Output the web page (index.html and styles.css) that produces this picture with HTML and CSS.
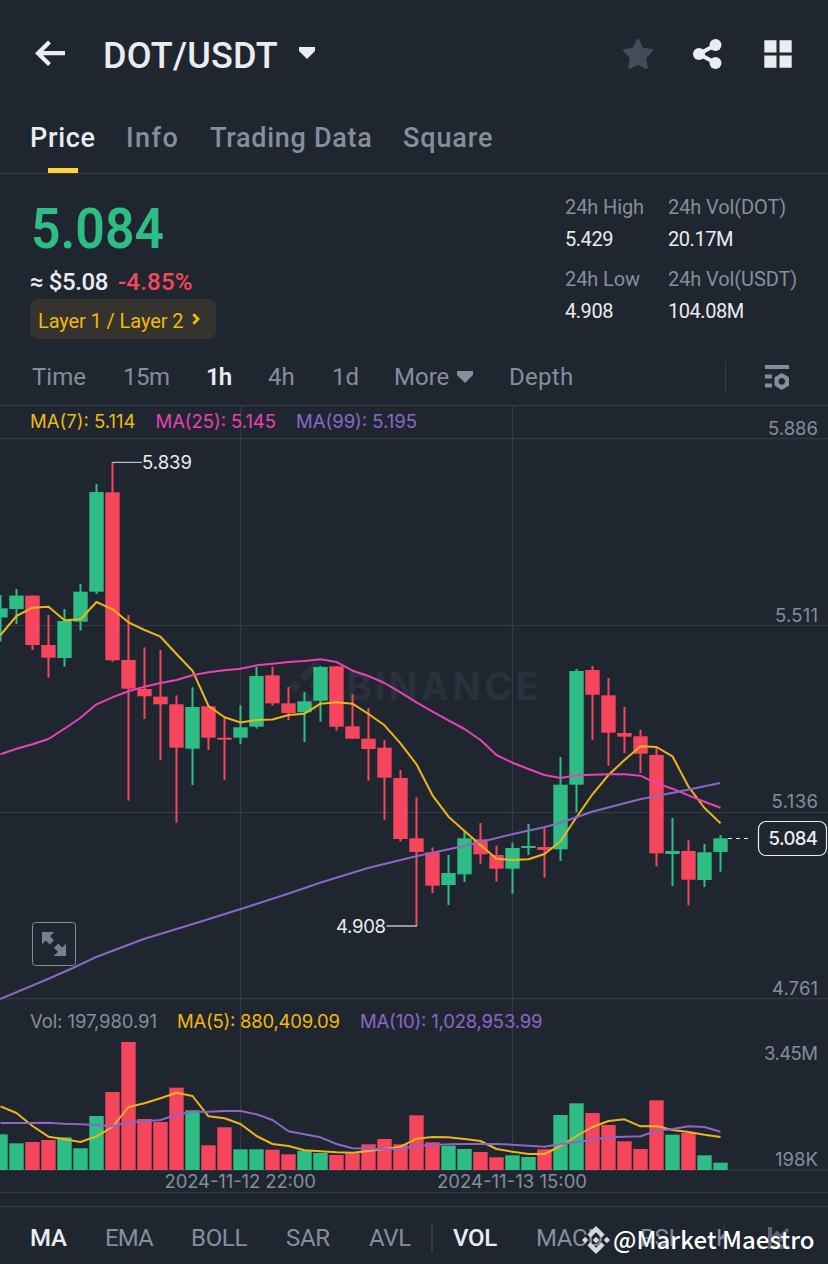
FILE: index.html
```html
<!DOCTYPE html>
<html lang="en">
<head>
<meta charset="utf-8">
<title>DOT/USDT</title>
<link rel="stylesheet" href="styles.css">
</head>
<body>
<div class="app">
  <header class="topbar">
    <svg class="back" width="32" height="26" viewBox="0 0 32 26"><path d="M15.500 2 4 13.200 15.500 24.400M4 13.200H31" fill="none" stroke="currentColor" stroke-width="4.200"/></svg>
    <h1 class="pair">DOT/USDT</h1>
    <svg class="caret" width="16" height="12" viewBox="0 0 16 12"><path d="M0 0h16v4L8 12 0 4z" fill="currentColor"/></svg>
    <svg class="star" width="30" height="30" viewBox="0 0 30 30"><path d="M15 1.500 19 10.200 28.500 11.500 21.700 18.500 23.300 28.400 15 24.200 6.700 28.400 8.300 18.500 1.500 11.500 11 10.200z" fill="currentColor" stroke="currentColor" stroke-width="3" stroke-linejoin="round"/></svg>
    <svg class="share" width="30" height="30" viewBox="0 0 30 30"><path d="M22.500 6 6 15l16.500 9" fill="none" stroke="currentColor" stroke-width="4"/><circle cx="6" cy="15" r="6" fill="currentColor"/><circle cx="22.500" cy="6" r="6" fill="currentColor"/><circle cx="22.500" cy="24" r="6" fill="currentColor"/></svg>
    <svg class="grid" width="28" height="28" viewBox="0 0 28 28"><path d="M.3 .3h12.200v12.200H.3zM15.500 .3h12.200v12.200H15.500zM.3 15.500h12.200v12.200H.3zM15.500 15.500h12.200v12.200H15.500z" fill="currentColor"/></svg>
  </header>

  <nav class="tabs">
    <a class="tab tab-price active">Price</a>
    <a class="tab tab-info">Info</a>
    <a class="tab tab-data">Trading Data</a>
    <a class="tab tab-square">Square</a>
  </nav>

  <section class="summary">
    <div class="quote">
      <div class="last">5.084</div>
      <div class="fiat"><span class="usd">≈ $5.08</span><span class="change">-4.85%</span></div>
      <a class="tag"><span>Layer 1 / Layer 2</span><svg width="8" height="12" viewBox="0 0 8 12"><path d="M1.300 1.200 6 6 1.300 10.800" fill="none" stroke="currentColor" stroke-width="2.800"/></svg></a>
    </div>
    <dl class="stats">
      <div><dt>24h High</dt><dd>5.429</dd></div>
      <div><dt>24h Vol(DOT)</dt><dd>20.17M</dd></div>
      <div><dt>24h Low</dt><dd>4.908</dd></div>
      <div><dt>24h Vol(USDT)</dt><dd>104.08M</dd></div>
    </dl>
  </section>

  <nav class="ranges">
    <a class="r-time">Time</a>
    <a class="r-15m">15m</a>
    <a class="r-1h active">1h</a>
    <a class="r-4h">4h</a>
    <a class="r-1d">1d</a>
    <a class="r-more">More<svg width="16" height="12" viewBox="0 0 16 12"><path d="M0 0h16v4L8 12 0 4z" fill="currentColor"/></svg></a>
    <a class="r-depth">Depth</a>
    <span class="settings"><svg width="25" height="26" viewBox="0 0 25 26"><path d="M0 0h24v4H0zM0 9.500h7v4H0zM0 18.500h7v4H0z" fill="currentColor"/><path fill-rule="evenodd" d="M16.800 8l7.200 4.200v8.300L16.800 25l-7.300-4.500v-8.300zM16.800 13a3.400 3.400 0 1 0 .01 0z" fill="currentColor"/></svg></span>
  </nav>

  <svg class="chart" width="828" height="800" viewBox="0 406 828 800">
    <g class="gridlines">
      <path d="M0 438.700H828M0 625.500H828M0 812.500H828M0 998.700H828M0 1170.200H828M0 1192.500H828M240.500 406V1170M512.500 406V1170"/>
    </g>
    <g class="brand-mark">
      <path transform="translate(289 660) scale(.411)" d="M38.730 53.200l24.590-24.580 24.600 24.600 14.300-14.310L63.320 0 24.430 38.900zM0 63.310l14.300-14.310 14.310 14.310-14.310 14.300zM38.730 73.410l24.590 24.590 24.600-24.600 14.310 14.290-38.900 38.910-38.910-38.880zM98 63.310l14.300-14.310 14.310 14.300-14.310 14.320zM77.830 63.300L63.320 48.780 48.810 63.280l14.510 14.500z"/>
      <text x="346.500" y="700" textLength="192">BINANCE</text>
    </g>
    <g id="volume"></g>
    <g id="candles"></g>
    <g id="lines"></g>
    <g class="labels">
      <text class="ma-a" x="30" y="428.300" textLength="105.500">MA(7): 5.114</text>
      <text class="ma-b" x="155.500" y="428.300" textLength="120.500">MA(25): 5.145</text>
      <text class="ma-c" x="296" y="428.300" textLength="121">MA(99): 5.195</text>
      <text x="30" y="1028.300" textLength="127">Vol: 197,980.91</text>
      <text class="ma-a" x="177" y="1028.300" textLength="163">MA(5): 880,409.09</text>
      <text class="ma-c" x="360" y="1028.300" textLength="182.500">MA(10): 1,028,953.99</text>
      <text x="768" y="435.300" textLength="50">5.886</text>
      <text x="775" y="622.300" textLength="43">5.511</text>
      <text x="771.500" y="808.300" textLength="46.500">5.136</text>
      <text x="772" y="995.300" textLength="46">4.761</text>
      <text x="764" y="1060.300" textLength="54">3.45M</text>
      <text x="775" y="1166.300" textLength="43">198K</text>
      <text x="164.500" y="1188.200" textLength="151.500">2024-11-12 22:00</text>
      <text x="437" y="1188.200" textLength="150">2024-11-13 15:00</text>
      <text class="mark" x="142" y="469.200" textLength="50">5.839</text>
      <text class="mark" x="336" y="933.200" textLength="50">4.908</text>
    </g>
    <path class="leader" d="M112.500 462.300H142M386.500 926H417"/>
    <path class="current" d="M728 838.500H748"/>
    <rect class="price-box" x="758.500" y="821.500" width="68" height="34" rx="7.500"/>
    <text class="price-now" x="768.500" y="845.300" textLength="49.500">5.084</text>
    <g class="expand">
      <rect x="32.500" y="922.500" width="43" height="43" rx="3"/>
      <path d="M42 932h12.300l-4.300 4.300 4 4-4.200 4.200-4-4-3.800 3.800zM66 956H53.700l4.300-4.300-4-4 4.200-4.200 4 4 3.800-3.800z"/>
    </g>
  </svg>

  <nav class="indicators">
    <a class="i-ma active">MA</a>
    <a class="i-ema">EMA</a>
    <a class="i-boll">BOLL</a>
    <a class="i-sar">SAR</a>
    <a class="i-avl">AVL</a>
    <a class="i-vol active">VOL</a>
    <a class="i-macd">MACD</a>
    <a class="i-rsi">RSI</a>
    <a class="i-k">K</a>
    <span class="i-icon"><svg width="21" height="22" viewBox="0 0 21 22"><path d="M0 0h4v18h17v4H0z" fill="currentColor"/><path d="M3 13 9 6l4 4 7-8M7 17l12-9" fill="none" stroke="currentColor" stroke-width="3.500"/></svg></span>
  </nav>
  <div class="credit">
    <svg width="28" height="28" viewBox="0 0 126.610 126.610"><path fill="currentColor" d="M38.730 53.200l24.590-24.580 24.600 24.600 14.300-14.310L63.320 0 24.430 38.900zM0 63.310l14.300-14.310 14.310 14.310-14.310 14.300zM38.730 73.410l24.590 24.590 24.600-24.600 14.310 14.290-38.900 38.910-38.910-38.880zM98 63.310l14.300-14.310 14.310 14.300-14.310 14.320zM77.830 63.300L63.320 48.780 48.810 63.280l14.510 14.500z"/></svg>
    <span>@Market Maestro</span>
  </div>
</div>
<script src="chart.js"></script>
</body>
</html>
```
FILE: styles.css
```css
* { box-sizing: border-box; }
body {
  margin: 0;
  background: #1f2630;
  color: #eaecef;
  font-family: Roboto, "Liberation Sans", sans-serif;
}
h1, dl, dd { margin: 0; }
svg { display: block; flex: none; }
.app {
  position: relative;
  display: flex;
  flex-direction: column;
  width: 828px;
  height: 1264px;
  overflow: hidden;
}
.app > * { flex: none; }

.topbar {
  display: flex;
  align-items: center;
  height: 108px;
  padding: 0 36px 0 34px;
}
.back { margin-right: 37px; margin-top: -2px; }
.pair {
  width: 196px;
  font-size: 36px;
  line-height: 40px;
  font-weight: 500;
  letter-spacing: 0.2px;
  padding-top: 3px;
}
.caret { margin-top: -3px; }
.star { margin-left: auto; color: #434c5a; }
.share { margin-left: 40px; }
.grid { margin-left: 41px; }

.tabs {
  display: flex;
  height: 66px;
  padding-left: 30px;
  border-bottom: 1px solid #333b47;
  color: #848e9c;
  font-size: 27px;
  font-weight: 500;
  line-height: 60px;
  letter-spacing: 0.7px;
  white-space: nowrap;
}
.tab { position: relative; height: 65px; }
.tab-price { width: 96px; }
.tab-info { width: 84px; letter-spacing: 1.400px; }
.tab-data { width: 193px; }
.tab-square { letter-spacing: 0.900px; }
.tab.active { color: #eaecef; }
.tab.active::after {
  content: "";
  position: absolute;
  left: 18px;
  bottom: 0;
  width: 30px;
  height: 5px;
  background: #fcd535;
}

.summary {
  display: flex;
  justify-content: space-between;
  height: 174px;
  padding: 22px 28px 0 30px;
}
.last {
  height: 66px;
  color: #2ebd85;
  font-size: 56px;
  line-height: 67px;
  font-weight: 600;
  transform: translateX(1px) scaleX(0.925);
  transform-origin: left;
}
.fiat {
  display: flex;
  height: 37px;
  font-size: 24px;
  line-height: 40px;
  font-weight: 500;
}
.usd { width: 88px; letter-spacing: -0.400px; }
.change { color: #f6465d; letter-spacing: 0.200px; }
.tag {
  display: flex;
  align-items: center;
  width: 186px;
  height: 40px;
  padding: 3px 0 0 8px;
  border-radius: 8px;
  background: #35332d;
  color: #f0b90b;
  font-size: 20px;
}
.tag span { width: 154px; letter-spacing: -0.100px; }
.tag svg { margin-top: -4px; }
.stats {
  display: grid;
  grid-template-columns: 103px 132px;
  grid-auto-rows: 72px;
  font-size: 20px;
  line-height: 32px;
  letter-spacing: -0.100px;
  margin-top: -5px;
}
.stats dt { color: #848e9c; white-space: nowrap; }
.stats dd { letter-spacing: -0.450px; }

.ranges {
  display: flex;
  align-items: center;
  height: 58px;
  padding-left: 32px;
  border-bottom: 1px solid #333b47;
  color: #848e9c;
  font-size: 24px;
}
.ranges a { padding-top: 1px; }
.ranges .active, .indicators .active { color: #eaecef; font-weight: 500; }
.r-time { width: 91px; }
.r-15m { width: 83px; letter-spacing: -0.500px; }
.ranges .r-1h { width: 62px; letter-spacing: -1px; font-weight: 600; }
.r-4h { width: 64px; }
.r-1d { width: 62px; }
.r-more { display: flex; align-items: center; justify-content: space-between; width: 79px; }
.r-depth { margin-left: 36px; letter-spacing: 0.300px; }
.settings {
  margin-left: auto;
  width: 103px;
  height: 32px;
  padding: 4px 0 0 39px;
  border-left: 1px solid #333b47;
}

.chart { font-family: Inter, "Liberation Sans", sans-serif; }
.gridlines path { fill: none; stroke: #333a46; stroke-width: 1.200; }
.brand-mark { fill: #2b313c; font-size: 38px; font-weight: 700; }
.labels { fill: #848e9c; font-size: 18.500px; }
.labels .ma-a { fill: #f0b90b; }
.labels .ma-b { fill: #e843b5; }
.labels .ma-c { fill: #8d66c6; }
.labels .mark { fill: #eaecef; }
.up { fill: #2ebd85; }
.down { fill: #f6465d; }
.line { fill: none; stroke-width: 2; stroke-linejoin: round; }
.line-a { stroke: #edb51c; }
.line-b { stroke: #e843b5; }
.line-c { stroke: #8d66c6; }
.leader { fill: none; stroke: #b7bdc6; stroke-width: 1.300; }
.current { stroke: #eaecef; stroke-width: 1; stroke-dasharray: 4 4; }
.price-box { fill: #1f2630; stroke: #eaecef; stroke-width: 1.200; }
.price-now { fill: #eaecef; font-size: 18.500px; font-weight: 500; }
.expand rect { fill: none; stroke: #848e9c; stroke-width: 1; }
.expand path { fill: #76808f; }

.indicators {
  display: flex;
  align-items: center;
  height: 58px;
  padding: 5px 0 0 30px;
  border-top: 1px solid #333b47;
  color: #848e9c;
  font-size: 24px;
  letter-spacing: -0.300px;
}
.i-ma { width: 75px; }
.i-ema { width: 86px; letter-spacing: -0.900px; }
.i-boll { width: 95px; }
.i-sar { width: 83px; }
.i-avl { width: 62px; }
.i-vol { width: 105px; padding-left: 20px; line-height: 30px; border-left: 2px solid #333b47; }
.i-macd { width: 104px; }
.i-rsi { width: 76px; }
.i-k { width: 9px; overflow: hidden; line-height: 30px; border-right: 1px solid #333b47; }
.i-icon { margin-left: 43px; color: #5d6675; }

.credit {
  position: absolute;
  left: 582px;
  top: 1221px;
  display: flex;
  align-items: center;
  height: 36px;
  color: #fff;
  font: 500 24px/36px "Noto Sans CJK SC", sans-serif;
  letter-spacing: 0.080px;
  text-shadow: 0 0 2px #1f2630;
  white-space: nowrap;
}
.credit svg { margin-right: 3px; margin-top: 2px; color: #d8d9db; }
```
FILE: chart.js
```js
// One row per hourly candle: direction, high, low, body top, body bottom, volume top.
const candles = [
  ["u",595,641.5,608.3,617.5,1134.3],["u",589,624,595.6,609,1143.3],["d",595.6,650,595.6,645,1142],
  ["d",615,677.7,645,657.7,1140],["u",609,666.7,621,658,1137.3],["u",584,630.7,591.7,621.7,1148.3],
  ["u",484,594,492,591.7,1116],["d",462,661.7,492.3,660.3,1092],["d",615,800.7,660,688.7,1042],
  ["d",647.3,719,689,696.3,1119],["d",650,760,696.7,704.3,1122],["d",695.3,822.7,704.3,747.7,1087.7],
  ["u",687.3,785,707,748.7,1110.3],["d",706,750,706.3,737.7,1145.3],["d",716.7,780,737.7,739.7,1127.3],
  ["u",705.3,744,727.3,737.7,1149.3],["u",666.7,728.7,676,726.7,1149.3],["d",666.7,705.7,675.3,703.3,1149.7],
  ["d",687,720,703.3,713,1154.3],["u",692,742,701.3,712.3,1150.7],["u",666,721.7,667,700.7,1153],
  ["d",666.3,730.7,666.3,726.7,1155],["d",694.3,739,726.3,738.7,1153.3],["d",708,780.7,738.7,749,1144.3],
  ["d",740,819.7,747.7,777.7,1139],["d",770,841.7,778,839,1144.3],["d",797.3,926,838.3,852,1115.3],
  ["d",847.3,893,852.3,885.7,1142.3],["u",855,905,873,885,1145.7],["u",831,882,838.3,874.3,1149],
  ["d",823,863.7,839.3,854.3,1152],["d",845.7,881.7,855,868.7,1157.3],["u",842.7,893.7,848,868.7,1155.3],
  ["u",824,855,846,848,1157],["d",828.3,877.7,847,850,1149.3],["u",757,861,784.7,849.3,1115],
  ["u",669,812.3,671,784.7,1103.3],["d",666,740,670,694.7,1113],["d",678,765.7,695.3,732.7,1125],
  ["d",707,753,733,736.7,1141.3],["d",729.7,773,736.3,753.7,1149],["d",747.7,866.3,755,853.3,1100.3],
  ["u",818,886,851,854,1134.7],["d",840.3,905.3,851,879.7,1133],["u",844,887,852.3,880,1155.3],
  ["u",835,871.7,838.3,852,1162.7]
];
const ma7 = [635,616,607.7,606.7,620.3,619.3,602,609.3,622.3,630,636.7,654,670.7,706,717.3,722.5,720,719.5,715,713.7,703.7,702.3,703.7,714,725.3,743.3,764.3,795.3,816.7,831,845,858.7,860,859.3,854,841.3,817.3,794.3,775,760,746.3,747,756.3,786.7,808,823.3];
const ma25 = [754.3,748.7,744.3,739,728.7,717.7,704.3,697.3,691.3,686.7,683,680,675.3,672.3,670.3,668.7,665.3,663.7,662,661,659.3,662,670.7,676,683,692.3,702.3,711.7,720.3,729,740,755,762.7,769,775,778,775.3,774.7,774.3,774.3,775.7,783.3,788.7,795.3,801.7,807.7];
const ma99 = [[0,999],[48,979],[74,967.5],[97,956.7],[143,939.3],[197,922.7],[240,909.3],[288,893.7],[320,882.7],[368,868],[416,856.3],[464,846],[512,834.3],[544,827.3],[560,823],[592,811.7],[640,799.3],[688,789.7],[720,783]];
const vol5 = [1106.3,1113,1126,1136.7,1139.3,1142,1136.3,1127,1107,1103.3,1098.3,1092.7,1096,1116.3,1118.3,1124,1136,1144,1146,1150.3,1151.3,1152.3,1152.7,1151,1149,1146.7,1138.7,1137,1137.3,1139,1141,1149,1151.7,1154,1154,1146,1136,1127,1121,1119.3,1126.3,1126,1130,1132,1134.7,1137];
const vol10 = [1123,1123,1123,1122.7,1123.7,1124.3,1125,1126.3,1122.3,1121.3,1120,1114.7,1111.7,1111.7,1111,1111,1114.3,1120,1131.3,1134.3,1137.3,1144,1148.3,1148.7,1149.3,1148.7,1146,1145,1144.3,1144,1144,1144,1144.7,1145.7,1146.7,1144,1142.3,1139.7,1137.3,1136.7,1136.3,1131,1129,1126.3,1127,1131.7];

const NS = "http://www.w3.org/2000/svg";
const STEP = 16;
const centre = i => i * STEP + 0.5;

function add(parent, tag, attrs) {
  const el = document.createElementNS(NS, tag);
  for (const k in attrs) el.setAttribute(k, attrs[k]);
  document.getElementById(parent).appendChild(el);
}
function rect(parent, cls, x, y, w, h) {
  add(parent, "rect", { class: cls, x, y, width: w, height: h });
}
function line(cls, points) {
  add("lines", "polyline", { class: "line " + cls, points: points.map(p => p.join(",")).join(" ") });
}
const series = values => values.map((y, i) => [centre(i), y]);

candles.forEach(([dir, high, low, top, bottom, vol], i) => {
  const cls = dir === "u" ? "up" : "down";
  rect("candles", cls, centre(i) - 1, high, 2, low - high);
  rect("candles", cls, centre(i) - 7.2, top, 14.4, Math.max(bottom - top, 2));
  rect("volume", cls, centre(i) - 7.2, vol, 14.4, 1170 - vol);
});
line("line-a", series(ma7));
line("line-b", series(ma25));
line("line-c", ma99);
line("line-a", series(vol5));
line("line-c", series(vol10));
```
